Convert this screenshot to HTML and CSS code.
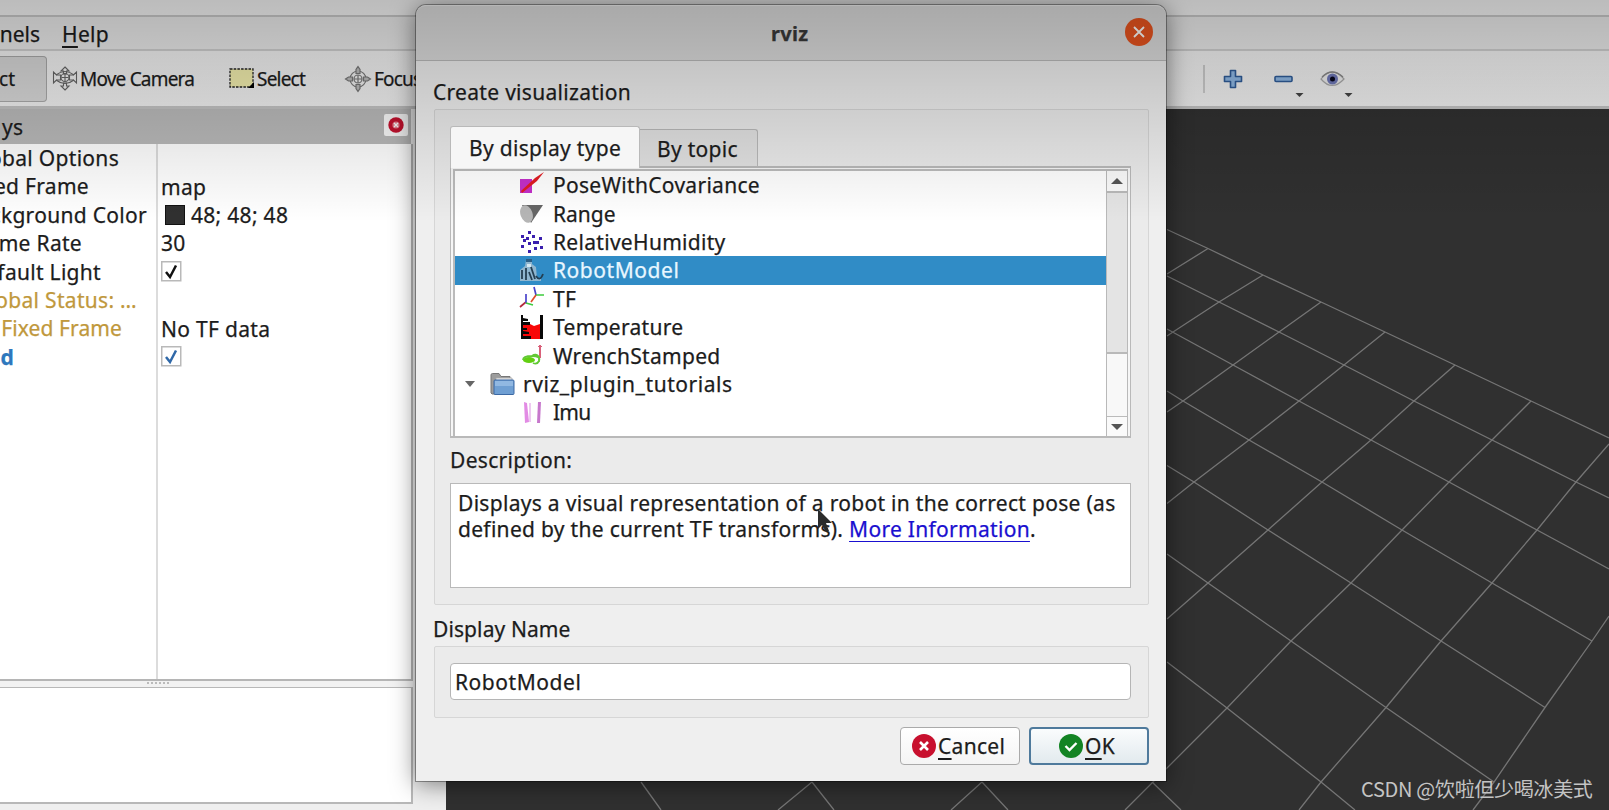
FILE: index.html
```html
<!DOCTYPE html>
<html lang="en">
<head>
    <meta charset="UTF-8">
    <meta name="viewport" content="width=device-width, initial-scale=1.0">
    <title>rviz</title>
    <link rel="stylesheet" href="styles.css">
</head>
<body>
    <div class="app">
        <div class="titlestrip"></div>
        <div class="menubar">
            <span class="menu menu-panels">nels</span>
            <span class="menu menu-help"><u>H</u>elp</span>
        </div>
        <div class="toolbar">
            <div class="tool tool-interact"><span>ct</span></div>
            <div class="tool tool-move">
                <svg width="26" height="26" viewBox="0 0 26 26" fill="none" stroke="#666" stroke-width="1.1">
                    <path d="M13 1l4 4h-2.500v3h-3V5H9zM13 24l4-4h-2.500v-3h-3v3H9z"/>
                    <path d="M1.500 6v11l3-3h4V9h-4zM24.500 6v11l-3-3h-4V9h4z"/>
                    <circle cx="13" cy="11.500" r="4"/>
                    <path d="M4 9q9-7 18 0M4 14q9 7 18 0M13 8v7M9.500 11.500h7"/>
                </svg>
                <span>Move Camera</span>
            </div>
            <div class="tool tool-select">
                <svg width="26" height="22" viewBox="0 0 26 22">
                    <rect x="1" y="1" width="23" height="18" fill="#f3efae" stroke="#222" stroke-width="1.3" stroke-dasharray="2.500 1.200"/>
                    <path d="M25 14v6h-6z" fill="#000"/>
                </svg>
                <span>Select</span>
            </div>
            <div class="tool tool-focus">
                <svg width="28" height="28" viewBox="0 0 28 28" fill="none" stroke="#777" stroke-width="1.200">
                    <circle cx="14" cy="14" r="8"/>
                    <circle cx="14" cy="14" r="4"/>
                    <path d="M14 10v8M10 14h8"/>
                    <path d="M14 1.500l2 3v4h-4v-4zM14 26.500l2-3v-4h-4v4zM1.500 14l3-2h4v4h-4zM26.500 14l-3-2h-4v4h4z" fill="#bbb"/>
                </svg>
                <span>Focus</span>
            </div>
            <div class="tool-right">
                <i class="separator"></i>
                <svg class="t-plus" width="20" height="20" viewBox="0 0 20 20">
                    <path d="M7.500 1.500h5v6h6v5h-6v6h-5v-6h-6v-5h6z" fill="#8fb8e4" stroke="#2f5c98" stroke-width="1.600" stroke-linejoin="round"/>
                </svg>
                <svg class="t-minus" width="28" height="36" viewBox="0 0 28 36">
                    <rect x="2" y="15.500" width="17" height="5" rx="1" fill="#8fb8e4" stroke="#2f5c98" stroke-width="1.600"/>
                    <path d="M22.500 32h8l-4 4z" fill="#444"/>
                </svg>
                <svg class="t-eye" width="34" height="38" viewBox="0 0 34 38">
                    <path d="M1 19Q12 5 24 19Q12 32 1 19z" fill="#eee" stroke="#aaa" stroke-width="1.200"/>
                    <circle cx="12.500" cy="19" r="5.500" fill="#6f78b8"/>
                    <circle cx="12.500" cy="19" r="2.500" fill="#06061c"/>
                    <path d="M2 17Q12 7 23 17" fill="none" stroke="#8a8a8a" stroke-width="1.300"/>
                    <path d="M24.500 33h8l-4 4z" fill="#444"/>
                </svg>
            </div>
        </div>

        <div class="workspace">
            <div class="dock">
                <div class="dock-title">
                    <span>ys</span>
                    <div class="dock-close">
                        <svg width="16" height="16" viewBox="0 0 16 16">
                            <circle cx="8" cy="8" r="7.700" fill="#c5122f"/>
                            <circle cx="8" cy="8" r="3.600" fill="#e9808f"/>
                            <path d="M6 6l4 4M10 6l-4 4" stroke="#fff" stroke-width="1.300"/>
                        </svg>
                    </div>
                </div>
                <div class="properties">
                    <div class="prop"><span class="name">obal Options</span><span class="value"></span></div>
                    <div class="prop"><span class="name">ed Frame</span><span class="value">map</span></div>
                    <div class="prop"><span class="name">ckground Color</span><span class="value"><i class="swatch"></i>48; 48; 48</span></div>
                    <div class="prop"><span class="name">me Rate</span><span class="value">30</span></div>
                    <div class="prop"><span class="name">fault Light</span><span class="value">
                        <svg width="21" height="21" viewBox="0 0 21 21"><rect x=".75" y=".75" width="19" height="19" fill="#fff" stroke="#b9b9b9" stroke-width="1.500"/><path d="M5 11l4 5L15 4.500" fill="none" stroke="#111" stroke-width="2.500"/></svg>
                    </span></div>
                    <div class="prop warn"><span class="name">obal Status: …</span><span class="value"></span></div>
                    <div class="prop warn"><span class="name">Fixed Frame</span><span class="value">No TF data</span></div>
                    <div class="prop display"><span class="name">d</span><span class="value">
                        <svg width="21" height="21" viewBox="0 0 21 21"><rect x=".75" y=".75" width="19" height="19" fill="#fff" stroke="#b9b9b9" stroke-width="1.500"/><path d="M5 11l4 5L15 4.500" fill="none" stroke="#2f68a8" stroke-width="2.500"/></svg>
                    </span></div>
                    <div class="prop filler"><span class="name"></span></div>
                </div>
                <div class="splitter"><i></i><i></i><i></i><i></i><i></i><i></i></div>
                <div class="help"></div>
            </div>
            <div class="viewport">
                <!-- ground grid, in window coordinates from the viewport's left top corner (446, 109) -->
                <svg class="grid" viewBox="446 109 1163 701" width="1163" height="701">
                    <path d="M1167 229.500L1208 248.500L1263 275L1321 302L1385 332L1455 365L1531 401L1609 438"/>
                    <path d="M1167 276L1219 302L1279 332L1344 365L1414 401L1492 440L1576 482L1609 498"/>
                    <path d="M1167 329L1233 365L1299 401L1371 440L1449 482L1537 530L1609 569"/>
                    <path d="M1167 391L1183 401L1249 440L1322 482L1402 530L1492 583L1592 641"/>
                    <path d="M1167 465.500L1194 482L1268 530L1351 583L1441 641L1545 707.500"/>
                    <path d="M1167 554L1208 583L1291 641L1386 707.500L1494 782"/>
                    <path d="M1167 662L1227 708L1321 782L1355 810"/>
                    <path d="M1152 782L1181 810M982 782L1008 810M812 782L834 810M641 782L661 810"/>
                    <path d="M1208 248.500L1167 274M1263 275L1219 302L1173 332L1167 336M1321 302L1279 332L1233 365L1183 401L1167 412"/>
                    <path d="M1385 332L1344 365L1299 401L1249 440L1194 482L1167 503.500"/>
                    <path d="M1455 365L1414 401L1371 440L1322 482L1268 530L1208 583L1167 619"/>
                    <path d="M1531 401L1492 440L1449 482L1402 530L1351 583L1291 641L1227 708L1167 768L1125 810"/>
                    <path d="M1609 444L1576 482L1537 530L1492 583L1441 641L1386 707.500L1321 782L1299 810"/>
                    <path d="M1609 616L1592 641L1545 707.500L1494 782L1473 810"/>
                    <path d="M982 782L951 810M812 782L778 810"/>
                </svg>
            </div>
        </div>
    </div>

    <div class="dialog">
        <div class="dialog-title">
            <span>rviz</span>
            <svg class="dialog-close" width="30" height="30" viewBox="0 0 30 30">
                <circle cx="15" cy="15" r="14" fill="#e9541f"/>
                <path d="M10 10l10 10M20 10L10 20" stroke="#fff" stroke-width="1.800"/>
            </svg>
        </div>

        <div class="section-label">Create visualization</div>
        <div class="group group-types">
            <div class="tabs">
                <div class="tab active">By display type</div>
                <div class="tab">By topic</div>
            </div>
            <div class="pane">
                <div class="list">
                    <div class="item">
                        <svg width="26" height="26" viewBox="0 0 26 26"><path d="M1 7h12v14H1z" fill="#c32fc9"/><path d="M2 19L16 6l9-6-7 9L3 21z" fill="#e01b22"/></svg>
                        <span>PoseWithCovariance</span>
                    </div>
                    <div class="item">
                        <svg width="26" height="26" viewBox="0 0 26 26"><path d="M3 4h21L12 22z" fill="#666"/><ellipse cx="7.500" cy="13" rx="6" ry="9" transform="rotate(-20 7.500 13)" fill="#b5b5b5"/></svg>
                        <span class="tight">Range</span>
                    </div>
                    <div class="item">
                        <svg width="26" height="26" viewBox="0 0 26 26" fill="#3a1fae"><path d="M9 2h3v3H9zM2 6h3v3H2zM13 6h3v3h-3zM20 8h3v3h-3zM7 8h3v3H7zM4 10h3v3H4zM9 13h3v3H9zM14 12h3v3h-3zM2 16h3v3H2zM17 12h3v3h-3zM21 17h3v3h-3zM15 18h3v3h-3zM9 21h3v3H9z"/></svg>
                        <span>RelativeHumidity</span>
                    </div>
                    <div class="item selected">
                        <svg width="26" height="26" viewBox="0 0 26 26"><path d="M7 3h6v4l4 3 1 12h4v2H1V13l5-4z" fill="#8fb6cf"/><path d="M7 2h6v3H7z" fill="#2b5f86"/><path d="M3 13v9M7 11v12M12 10l4 12M10 15l3 8M17 19q4 6 7-2" stroke="#243f52" stroke-width="1.800" fill="none"/><path d="M8 7h4v3H8z" fill="#d5e8f2"/></svg>
                        <span class="wide">RobotModel</span>
                    </div>
                    <div class="item">
                        <svg width="26" height="26" viewBox="0 0 26 26" fill="none" stroke-width="1.700"><path d="M1 21l6-5" stroke="#b32a3d"/><path d="M7 17V8M17 9l-2-8" stroke="#4b45cc"/><path d="M7 17l7 2M17 9h8" stroke="#3ecb3e"/><path d="M12 16l5-7" stroke="#e04b2a"/></svg>
                        <span>TF</span>
                    </div>
                    <div class="item">
                        <svg width="26" height="26" viewBox="0 0 26 26"><path d="M3 8l8 2 4 2 6-2v15H3z" fill="#f80707"/><path d="M2 1h2v24H2zM21 1h3v24h-3zM4 4l5 1v2H4zM4 8h7v3H4zM4 14h4v2H4zM4 17l6 1v2H4zM4 22h8v3H4z" fill="#080808"/></svg>
                        <span>Temperature</span>
                    </div>
                    <div class="item">
                        <svg width="26" height="26" viewBox="0 0 26 26" fill="none"><path d="M21 2v13" stroke="#d9607a" stroke-width="2"/><path d="M19 4l2-2 2 2" stroke="#d9607a"/><ellipse cx="10" cy="17" rx="6" ry="3" fill="#62cf12"/><path d="M4 17q0-4 9-4q9 0 7 5q-2 4-6 2M13 13q4-3 7 1v5" stroke="#62c934" stroke-width="1.800"/></svg>
                        <span>WrenchStamped</span>
                    </div>
                    <div class="item folder">
                        <i class="expander"></i>
                        <svg width="26" height="26" viewBox="0 0 26 26"><path d="M2 22V4q0-1.500 1.500-1.500H10l2 3h9V9H6v14H3z" fill="#9c9c9c" stroke="#777"/><path d="M7 7h16v4H7z" fill="#eee" stroke="#aaa" stroke-width=".8"/><rect x="5" y="9" width="20" height="14.500" rx="1" fill="#6f9fd3" stroke="#3c69a4"/><path d="M6 10h18v5H6z" fill="#91b8e2"/></svg>
                        <span class="wide">rviz_plugin_tutorials</span>
                    </div>
                    <div class="item">
                        <svg width="26" height="26" viewBox="0 0 26 26"><path d="M5 3l3 1 2 19-4 1z" fill="#e28be4"/><path d="M11 4v19" stroke="#e9b9ec" stroke-width="1.500"/><path d="M19 3h3l-1 21h-3z" fill="#c778cc"/></svg>
                        <span class="narrow">Imu</span>
                    </div>
                </div>
                <div class="scrollbar">
                    <div class="sb-button"><i class="up"></i></div>
                    <div class="sb-slider"></div>
                    <div class="sb-track"></div>
                    <div class="sb-button sb-down"><i class="down"></i></div>
                </div>
            </div>
            <div class="desc-label">Description:</div>
            <div class="desc">
                <div>Displays a visual representation of a robot in the correct pose (as</div>
                <div>defined by the current TF transforms). <a>More Information</a>.</div>
            </div>
        </div>

        <div class="section-label s-name">Display Name</div>
        <div class="group group-name">
            <div class="input wide">RobotModel</div>
        </div>

        <div class="buttons">
            <div class="button">
                <svg width="24" height="24" viewBox="0 0 24 24"><circle cx="12" cy="12" r="12" fill="#c8102e"/><path d="M8 8l8 8M16 8l-8 8" stroke="#fff" stroke-width="2.600"/></svg>
                <span><u>C</u>ancel</span>
            </div>
            <div class="button default">
                <svg width="24" height="24" viewBox="0 0 24 24"><circle cx="12" cy="12" r="12" fill="#138424"/><path d="M6.500 12l4 4 7-7" stroke="#fff" stroke-width="2.400" fill="none"/></svg>
                <span><u>O</u>K</span>
            </div>
        </div>
    </div>

    <svg class="cursor" width="20" height="28" viewBox="0 0 20 28"><path d="M1 1v20l4-4 4 7 3-1-3-8h6z" fill="#2b2b2b"/></svg>

    <div class="shade"></div>
    <div class="watermark">CSDN @饮啦但少喝冰美式</div>
</body>
</html>
```
FILE: styles.css
```css
* {
    box-sizing: border-box;
}

body {
    margin: 0;
    width: 1609px;
    height: 810px;
    overflow: hidden;
    position: relative;
    font-family: "Noto Sans", "Noto Sans CJK SC", sans-serif;
    font-size: 21px;
    line-height: 28px;
    letter-spacing: 0.3px;
    color: #1c1c1c;
    -webkit-text-stroke: 0.25px;
    background: #efefef;
    white-space: nowrap;
}

svg {
    display: block;
    flex: none;
}

u {
    text-decoration-thickness: 2px;
    text-underline-offset: 4px;
}

.tight { letter-spacing: 0; }
.wide { letter-spacing: 0.55px; }
.narrow { letter-spacing: -0.8px; }

.app {
    display: flex;
    flex-direction: column;
    height: 810px;
}

.titlestrip {
    height: 17px;
    background: #f8f8f8;
    border-bottom: 2px solid #cbcbcb;
}

.menubar {
    display: flex;
    align-items: center;
    height: 34px;
    padding-top: 1px;
    background: #eee;
    border-bottom: 2px solid #d2d2d2;
}

.menu-panels {
    width: 40px;
    letter-spacing: 0;
    display: flex;
    justify-content: flex-end;
}

.menu-help {
    margin-left: 22px;
}

.toolbar {
    display: flex;
    align-items: center;
    height: 58px;
    padding-top: 1px;
    font-size: 19px;
    letter-spacing: -0.8px;
    background: linear-gradient(#f5f5f5, #f0f0f0);
    border-bottom: 3px solid #c2c2c2;
}

.tool {
    display: flex;
    align-items: center;
    gap: 2px;
}

.tool-interact {
    width: 47px;
    height: 46px;
    padding-right: 31px;
    justify-content: flex-end;
    letter-spacing: 0;
    background: #d9d9d9;
    border: 1px solid #aaa;
    border-left: 0;
    border-radius: 0 4px 4px 0;
}

.tool-move {
    width: 177px;
    margin-left: 5px;
}

.tool-select {
    width: 115px;
}

.tool-focus {
    width: 76px;
}

.tool-right {
    display: flex;
    align-items: center;
    margin-left: 783px;
}

.separator {
    width: 2px;
    height: 28px;
    background: #ccc;
}

.t-plus {
    margin-left: 18px;
}

.t-minus {
    margin-left: 30px;
    overflow: visible;
}

.t-eye {
    margin-left: 19px;
}

.workspace {
    display: flex;
    flex: 1;
}

.dock {
    width: 446px;
    display: flex;
    flex-direction: column;
}

.dock-title {
    display: flex;
    align-items: center;
    justify-content: space-between;
    width: 411px;
    height: 35px;
    padding: 0 3px 0 2px;
    background: #b9b9b9;
}

.dock-close {
    display: flex;
    align-items: center;
    justify-content: center;
    width: 24px;
    height: 22px;
    margin-top: -4px;
    background: #f8f8f8;
    border-radius: 2px;
}

.properties {
    width: 413px;
    height: 537px;
    display: flex;
    flex-direction: column;
    background: #fff;
    border-right: 2px solid #b5b5b5;
    border-bottom: 2px solid #b5b5b5;
}

.prop {
    display: flex;
    height: 28.4px;
}

.prop.filler {
    flex: 1;
}

.name {
    width: 158px;
    padding-right: 37px;
    display: flex;
    justify-content: flex-end;
    border-right: 2px solid #dcdcdc;
}

/* the panel is scrolled left, so every name ends at its own place */
.prop:nth-child(2) .name { padding-right: 67px; }
.prop:nth-child(3) .name { padding-right: 9px; }
.prop:nth-child(4) .name { padding-right: 74px; }
.prop:nth-child(5) .name { padding-right: 55px; }
.prop:nth-child(6) .name { padding-right: 19px; }
.prop:nth-child(7) .name { padding-right: 34px; letter-spacing: 0.1px; }
.prop:nth-child(8) .name { padding-right: 142px; }

.value {
    display: flex;
    align-items: center;
    padding-left: 3px;
}

.swatch {
    width: 20px;
    height: 20px;
    margin: 0 6px 0 4px;
    background: #303030;
    border: 1px solid #111;
}

.warn .name {
    color: #c0983c;
}

.display .name {
    color: #2e78bd;
    font-weight: bold;
}

.splitter {
    display: flex;
    justify-content: center;
    gap: 2px;
    width: 413px;
    height: 6px;
    padding: 1px 97px 0 0;
    background: #f2f2f2;
}

.splitter i {
    width: 2px;
    height: 2px;
    background: #bbb;
}

.help {
    width: 413px;
    height: 117px;
    background: #fff;
    border: 2px solid #b8b8b8;
    border-left: 0;
    border-top-width: 1px;
}

.viewport {
    flex: 1;
    background: #303030;
    overflow: hidden;
}

.grid path {
    fill: none;
    stroke: #757575;
    stroke-width: 1.3;
}

/* dialog */
.dialog {
    position: absolute;
    left: 416px;
    top: 5px;
    width: 750px;
    height: 776px;
    background: #efefef;
    border-radius: 10px 10px 0 0;
    box-shadow: 0 0 0 1px rgba(0, 0, 0, 0.35), 0 3px 24px rgba(0, 0, 0, 0.5);
}

.dialog-title {
    display: flex;
    align-items: center;
    height: 56px;
    padding: 1px 12px 0 355px;
    justify-content: space-between;
    font-weight: bold;
    font-size: 20px;
    color: #3a3a3a;
    background: #dedede;
    border-top: 1px solid #eee;
    border-bottom: 1px solid #bbb;
    border-radius: 10px 10px 0 0;
}

.dialog-close {
    margin-top: -3px;
}

.section-label {
    padding: 17px 0 3px 17px;
}

.s-name {
    padding-top: 10px;
    letter-spacing: 0.1px;
}

.group {
    margin: 0 17px 0 18px;
    padding: 16px;
    background: #ebebeb;
    border: 1px solid #d6d6d6;
    border-radius: 2px;
}

.group-types {
    height: 496px;
    padding-left: 15px;
}

.group-name {
    height: 72px;
    padding-left: 15px;
}

.tabs {
    display: flex;
    align-items: flex-end;
    height: 40px;
}

.tab {
    height: 37px;
    width: 118px;
    padding: 5px 0 0 17px;
    background: #e2e2e2;
    border: 1px solid #b9b9b9;
    border-left: 0;
    border-bottom: 0;
    border-radius: 0 3px 0 0;
}

.tab.active {
    position: relative;
    z-index: 1;
    width: 190px;
    height: 42px;
    margin-bottom: -2px;
    padding: 7px 0 0 18px;
    background: #f6f6f6;
    border-left: 1px solid #b9b9b9;
    border-radius: 3px 3px 0 0;
}

.pane {
    display: flex;
    width: 681px;
    height: 272px;
    padding: 1px 1px 0;
    background: #f6f6f6;
    border: 2px solid #b9b9b9;
    border-left-width: 1px;
    border-right-width: 1px;
}

.list {
    flex: 1;
    margin-left: 1px;
    background: #fff;
    border: 2px solid #bbb;
    border-right: 0;
    border-bottom: 0;
}

.item {
    display: flex;
    align-items: center;
    height: 28.4px;
    padding-left: 64px;
    gap: 8px;
}

.item.selected {
    background: #308cc6;
    color: #e8f6ff;
}

.item.folder {
    padding-left: 10px;
}

.expander {
    border: 5px solid transparent;
    border-top: 6px solid #666;
    border-bottom: 0;
    margin-right: 6px;
}

.scrollbar {
    display: flex;
    flex-direction: column;
    width: 22px;
    margin-right: 1px;
    border: 1px solid #b9b9b9;
    border-top-width: 2px;
    border-bottom: 0;
}

.sb-button {
    display: flex;
    align-items: center;
    justify-content: center;
    height: 20px;
    background: #fafafa;
}

.sb-down {
    border-top: 1px solid #bbb;
}

.sb-slider {
    height: 163px;
    background: #e4e4e4;
    border-top: 2px solid #b9b9b9;
    border-bottom: 2px solid #b9b9b9;
}

.sb-track {
    flex: 1;
    background: #f8f8f8;
}

.up {
    border: 6px solid transparent;
    border-top: 0;
    border-bottom: 6px solid #555;
}

.down {
    border: 6px solid transparent;
    border-bottom: 0;
    border-top: 6px solid #555;
}

.desc-label {
    height: 45px;
    line-height: 45px;
}

.desc {
    height: 105px;
    width: 681px;
    padding: 6px 0 0 7px;
    line-height: 26px;
    background: #fff;
    border: 1px solid #b9b9b9;
}

.desc a {
    color: #1a0fd0;
    text-decoration: underline;
    text-decoration-thickness: 1px;
    text-underline-offset: 4px;
}

.input {
    width: 681px;
    height: 37px;
    padding: 4px 0 0 4px;
    background: #fff;
    border: 1px solid #b5b5b5;
    border-radius: 4px;
}

.buttons {
    display: flex;
    justify-content: flex-end;
    gap: 9px;
    padding: 9px 17px 0 0;
}

.button {
    display: flex;
    align-items: center;
    gap: 2px;
    width: 120px;
    height: 38px;
    padding-left: 11px;
    background: linear-gradient(#fff, #f4f4f4);
    border: 1px solid #aaa;
    border-radius: 4px;
}

.button.default {
    padding-left: 28px;
    background: linear-gradient(#fafcfd, #e2eaee);
    border: 2px solid #4f7a9c;
}

.cursor {
    position: absolute;
    left: 817px;
    top: 508px;
}

/* darkening at the top of the frame */
.shade {
    position: absolute;
    inset: 0 0 auto 0;
    height: 222px;
    background: linear-gradient(rgba(0, 0, 0, 0.245), rgba(0, 0, 0, 0));
    pointer-events: none;
}

.watermark {
    position: absolute;
    left: 1361px;
    top: 775px;
    font-family: "Noto Sans CJK SC", sans-serif;
    font-size: 20px;
    letter-spacing: -0.3px;
    color: #c4c4c4;
    -webkit-text-stroke: 0;
}
```
